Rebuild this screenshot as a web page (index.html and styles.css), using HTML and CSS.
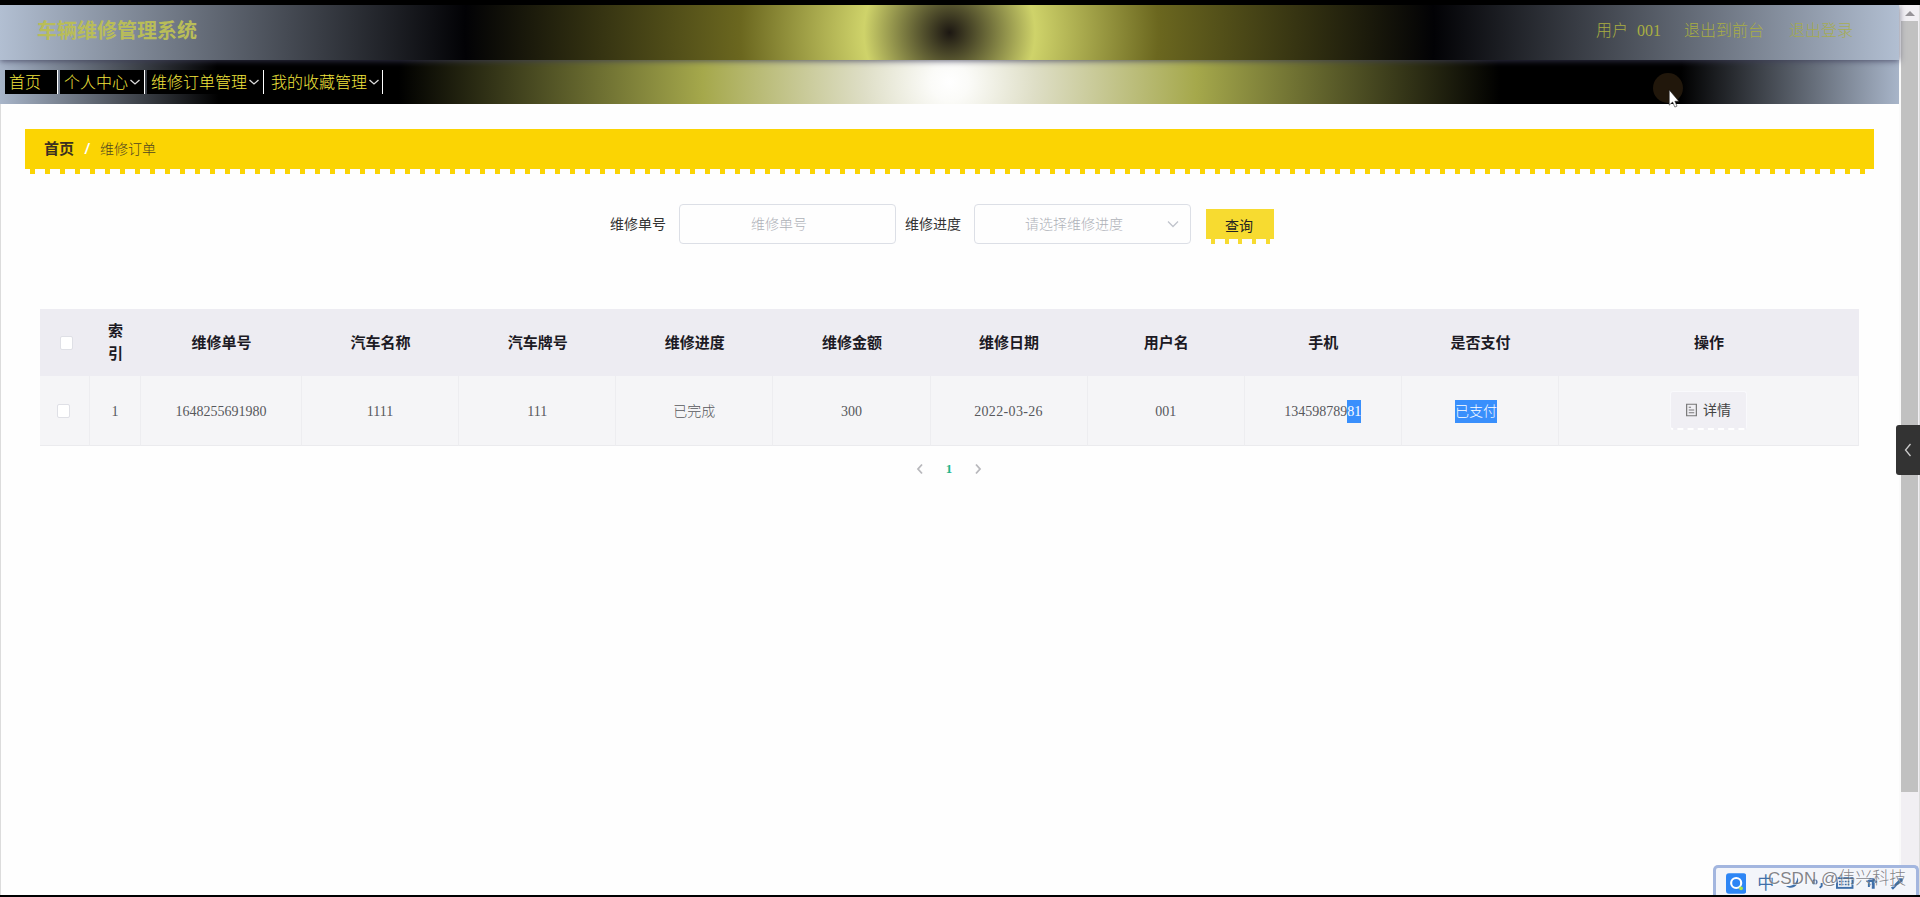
FILE: index.html
```
<!DOCTYPE html>
<html lang="zh-CN">
<head>
	<meta charset="UTF-8">
	<title>车辆维修管理系统</title>
	<link rel="stylesheet" href="styles.css">
</head>
<body>
	<div class="page">
		<div class="header">
			<h1 class="title">车辆维修管理系统</h1>
			<div class="user">
				<span class="name">用户 001</span>
				<span class="front">退出到前台</span>
				<span class="logout">退出登录</span>
			</div>
		</div>
		<ul class="nav">
			<li class="home">首页</li>
			<li class="center">个人中心<svg viewBox="0 0 12 12"><path d="M1.500 4l4.500 4 4.500-4"/></svg></li>
			<li class="order">维修订单管理<svg viewBox="0 0 12 12"><path d="M1.500 4l4.500 4 4.500-4"/></svg></li>
			<li class="collect">我的收藏管理<svg viewBox="0 0 12 12"><path d="M1.500 4l4.500 4 4.500-4"/></svg></li>
		</ul>
		<div class="crumb"><b>首页</b><i>/</i><span>维修订单</span></div>
		<div class="search">
			<label>维修单号</label>
			<div class="input">维修单号</div>
			<label>维修进度</label>
			<div class="input select">请选择维修进度<svg viewBox="0 0 12 12"><path d="M1 3.500l5 5 5-5"/></svg></div>
			<button class="query">查询</button>
		</div>
		<table class="list">
			<colgroup>
				<col class="c-check"><col class="c-index"><col class="c-no">
				<col><col><col><col><col><col><col><col>
				<col class="c-action">
			</colgroup>
			<thead>
				<tr>
					<th><span class="check"></span></th>
					<th>索<br>引</th>
					<th>维修单号</th>
					<th>汽车名称</th>
					<th>汽车牌号</th>
					<th>维修进度</th>
					<th>维修金额</th>
					<th>维修日期</th>
					<th>用户名</th>
					<th>手机</th>
					<th>是否支付</th>
					<th>操作</th>
				</tr>
			</thead>
			<tbody>
				<tr>
					<td class="pick"><span class="check"></span></td>
					<td>1</td>
					<td>1648255691980</td>
					<td>1111</td>
					<td>111</td>
					<td>已完成</td>
					<td>300</td>
					<td class="date">2022-03-26</td>
					<td>001</td>
					<td>134598789<span class="sel">81</span></td>
					<td class="paid"><span class="sel">已支付</span></td>
					<td class="action"><button class="detail"><svg viewBox="0 0 12 14"><path d="M.7.7h10.600v12.600H.7zM3 4h2.500M3 7h6M3 10h6"/></svg>详情</button></td>
				</tr>
			</tbody>
		</table>
		<div class="pager">
			<svg viewBox="0 0 12 12"><path d="M8 1.500L4 6l4 4.500"/></svg>
			<span>1</span>
			<svg viewBox="0 0 12 12"><path d="M4 1.500L8 6l-4 4.500"/></svg>
		</div>
	</div>
	<div class="scroll">
		<div class="up"></div>
		<div class="thumb"></div>
	</div>

	<div class="drawer"><svg viewBox="0 0 12 14"><path d="M8.500 1L3.500 7l5 6"/></svg></div>

	<div class="spot"></div>
	<svg class="mouse" viewBox="0 0 12 20"><path d="M1 1v16l3.500-3.300 2.400 5.300 2.300-1-2.300-5.100H11z"/></svg>

	<div class="ime">
		<svg class="logo" viewBox="0 0 21 21"><rect width="21" height="21" rx="3" fill="#2e86f5"/><circle cx="10.500" cy="10" r="5.200" fill="none" stroke="#fff" stroke-width="2.200"/><circle cx="15.500" cy="15.500" r="2" fill="#a6e34b"/></svg>
		<b>中</b>
		<svg class="moon" viewBox="0 0 16 16"><path d="M13 2c3 8-6 14-12 9 6 1 11-2 12-9z" fill="#3f6fa9"/></svg>
		<svg class="dot" viewBox="0 0 16 16"><circle cx="4" cy="7" r="2" fill="none" stroke="#3f6fa9" stroke-width="1.500"/><path d="M11 8v3l-2 2" fill="none" stroke="#3f6fa9" stroke-width="2"/></svg>
		<svg class="keys" viewBox="0 0 18 12"><rect x="1" y="1" width="16" height="10" fill="none" stroke="#3f6fa9" stroke-width="2"/><path d="M3 4.500h12M3 7.500h12" stroke="#3f6fa9" stroke-width="1.500" stroke-dasharray="2 1"/></svg>
		<svg class="shirt" viewBox="0 0 14 14"><path d="M1 6l4-4h4l4 4-2 1-1-1v7H7V6H5v5H3V6z" fill="#3f6fa9"/></svg>
		<svg class="tool" viewBox="0 0 14 14"><path d="M1 12L9 4l-1-2h5v5l-2-1-8 8z" fill="#3f6fa9"/></svg>
	</div>
	<div class="mark">CSDN @伟兴科技</div>
</body>
</html>
```
FILE: styles.css
```
*{
	box-sizing: border-box;
	margin: 0;
	padding: 0;
}
body{
	display: flex;
	height: 897px;
	overflow: hidden;
	border-top: 5px solid #000;
	border-bottom: 2px solid #000;
	background: #fefefe;
	font: 300 14px/23px "Liberation Serif","Noto Sans CJK SC",serif;
	color: #57585c;
}
svg{
	fill: none;
	stroke-width: 1.3;
}
ul{
	list-style: none;
}
.page{
	width: 1899px;
	border-left: 1px solid #dcdcdc;
}

/*头部*/
.header{
	position: relative;
	display: flex;
	justify-content: space-between;
	align-items: center;
	height: 55px;
	margin-left: -1px;
	padding: 0 46px 4px 37px;
	background: radial-gradient(circle at 50% 50%,#1c1712 0,#cfd36a 9%,#6b671f 22%,#020205 51%,#b2bfd2 100%);
	box-shadow: 0 1px 6px rgba(60,60,90,.8);
}
.title{
	padding-top: 1px;
	font-size: 20px;
	font-weight: 600;
	color: #b9bd58;
}
.user{
	display: flex;
	font-size: 16px;
	color: #a9ae42;
}
.name{
	word-spacing: 5px;
}
.front{
	margin-left: 23px;
}
.logout{
	margin-left: 25px;
	opacity: .85;
}

/*菜单*/
.nav{
	display: flex;
	gap: 2px;
	height: 44px;
	margin-left: -1px;
	padding: 10px 5px;
	background: radial-gradient(circle at 50% 50%,#fff 0,#fbfbf8 2%,#dedec6 9%,#a5a84b 26%,#000 58%,#000 77%,#a8b5c9 100%);
	font-size: 16px;
	color: #f2e53c;
}
.nav li{
	display: flex;
	align-items: center;
	height: 24px;
	padding-left: 4px;
	border-right: 1px solid #fff;
	background: #000;
}
.nav svg{
	width: 12px;
	height: 12px;
	margin-left: 1px;
	stroke: #ddd;
}
.nav .home{
	width: 53px;
}
.nav .center{
	width: 85px;
}
.nav .order{
	width: 117px;
}
.nav .collect{
	width: 117px;
	padding-left: 5px;
}

/*面包屑*/
.crumb{
	position: relative;
	display: flex;
	align-items: center;
	height: 40px;
	margin: 25px 25px 0 24px;
	padding-left: 19px;
	background: #fbd403;
	color: #4f4520;
}
.crumb:after,.query:after{
	content: "";
	position: absolute;
	left: 5px;
	right: 4px;
	top: 100%;
	height: 5px;
	background: repeating-linear-gradient(90deg,#fbd403 0,#fbd403 5px,transparent 5px,transparent 15px);
}
.crumb b{
	font-size: 15px;
	font-weight: 600;
	color: #3b3020;
}
.crumb i{
	width: 26px;
	font-family: "Liberation Sans",sans-serif;
	font-weight: bold;
	text-align: center;
	color: #fff;
}

/*查询*/
.search{
	display: flex;
	align-items: center;
	height: 40px;
	margin: 35px 0 0 609px;
}
.search label{
	width: 69px;
	font-weight: 400;
	color: #333;
}
.input{
	position: relative;
	width: 217px;
	height: 40px;
	margin-right: 9px;
	padding-right: 17px;
	border: 1px solid #dcdfe6;
	border-radius: 4px;
	line-height: 39px;
	text-align: center;
	color: #aeb1b8;
}
.select{
	margin-right: 15px;
}
.select svg{
	position: absolute;
	right: 11px;
	top: 13px;
	width: 12px;
	height: 12px;
	stroke: #c0c4cc;
}
button{
	border: 0;
	font: inherit;
}
.query{
	position: relative;
	width: 68px;
	height: 30px;
	padding: 4px 2px 0 0;
	background: #f7db30;
	font-weight: 400;
	color: #222;
}
.query:after{
	background: repeating-linear-gradient(90deg,#f7db30 0,#f7db30 4px,transparent 4px,transparent 13.7px);
}

/*列表*/
.list{
	width: 1819px;
	margin: 65px 0 0 39px;
	border-collapse: separate;
	border-spacing: 0;
	table-layout: fixed;
	text-align: center;
}
.c-check{
	width: 50px;
}
.c-index{
	width: 51px;
}
.c-no{
	width: 161px;
}
.c-action{
	width: 300px;
}
.list th{
	height: 67px;
	padding-top: 1px;
	background: #edecf2;
	font-size: 15px;
	font-weight: 600;
	color: #1c1a24;
}
.list td{
	height: 70px;
	padding-top: 1px;
	border-right: 1px solid #ededf0;
	border-bottom: 1px solid #ebebee;
	background: #f5f5f7;
}
.check{
	display: block;
	width: 13px;
	height: 14px;
	margin: 0 auto;
	border: 1px solid #dfe0e6;
	border-radius: 2px;
	background: #fff;
}
th .check{
	margin-left: 20px;
}
.pick .check{
	margin-left: 17px;
}
.date{
	letter-spacing: .35px;
}
.sel{
	display: inline-block;
	background: #398ffc;
	color: #fff;
}
.list .paid{
	padding-right: 8px;
}
.list .action{
	padding: 0;
}
.detail{
	display: inline-flex;
	justify-content: center;
	align-items: center;
	gap: 6px;
	width: 77px;
	height: 39px;
	border: 1px solid #f9f9fc;
	border-bottom: 2px dashed #fff;
	border-radius: 3px;
	background: #f0eff4;
	font-weight: 400;
	color: #444;
	vertical-align: middle;
}
.detail svg{
	width: 11px;
	height: 14px;
	stroke: #777;
}

/*分页*/
.pager{
	display: flex;
	justify-content: center;
	align-items: center;
	gap: 20px;
	margin: 11px 2px 0 0;
	font-size: 13px;
	font-weight: bold;
	color: #21b58a;
}
.pager svg{
	width: 12px;
	height: 12px;
	stroke: #b8b8bc;
	stroke-width: 1.8;
}

/*滚动条*/
.scroll{
	width: 21px;
	border-right: 1px solid #ddd;
	border-left: 2px solid #fafafa;
	background: #f1eff3;
}
.up{
	width: 0;
	margin: 6px auto 5px;
	border: 5px solid transparent;
	border-top: 0;
	border-bottom: 5px solid #969398;
}
.thumb{
	width: 17px;
	height: 771px;
	background: #c1c1c1;
}
.drawer{
	position: absolute;
	left: 1896px;
	top: 425px;
	width: 24px;
	height: 50px;
	padding: 18px 6px;
	border-radius: 3px 0 0 3px;
	background: #333;
}
.drawer svg{
	display: block;
	width: 12px;
	height: 14px;
	stroke: #ccc;
}

/*鼠标*/
.spot{
	position: absolute;
	left: 1653px;
	top: 73px;
	width: 30px;
	height: 30px;
	border-radius: 50%;
	background: #21170b;
}
.mouse{
	position: absolute;
	left: 1668px;
	top: 89px;
	width: 12px;
	height: 19px;
	fill: #fff;
	stroke: #222;
	stroke-width: .6;
}

/*输入法*/
.ime{
	position: absolute;
	left: 1713px;
	top: 865px;
	display: flex;
	align-items: center;
	width: 206px;
	height: 30px;
	padding: 3px 0 0 10px;
	border: 3px solid #a3b6df;
	border-bottom: 0;
	border-radius: 5px 5px 0 0;
	background: #f3f5fa;
}
.ime .logo{
	width: 21px;
	height: 21px;
}
.ime b{
	margin: 0 11px;
	font-size: 17px;
	color: #3f6fa9;
}
.ime .moon,.ime .dot{
	width: 16px;
	height: 16px;
	margin-right: 10px;
}
.ime .keys{
	width: 18px;
	height: 12px;
	margin-right: 11px;
}
.ime .shirt,.ime .tool{
	width: 14px;
	height: 14px;
	margin-right: 12px;
}
.mark{
	position: absolute;
	left: 1768px;
	top: 867px;
	font: 300 17px/24px "Liberation Sans","Noto Sans CJK SC",sans-serif;
	color: rgba(110,110,115,.85);
	text-shadow: 1px 1px 0 rgba(255,255,255,.6);
	white-space: nowrap;
}
```
